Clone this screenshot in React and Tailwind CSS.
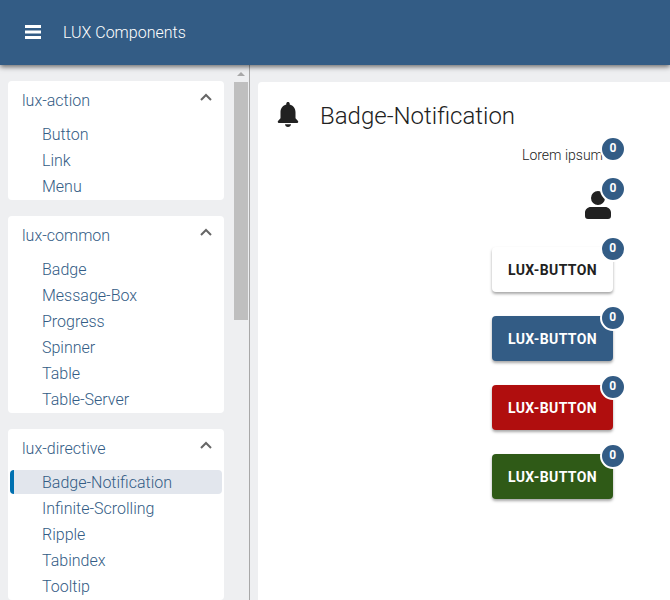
import React from "react";

const groups = [
  { title: "lux-action", items: ["Button", "Link", "Menu"] },
  { title: "lux-common", items: ["Badge", "Message-Box", "Progress", "Spinner", "Table", "Table-Server"] },
  { title: "lux-directive", items: ["Badge-Notification", "Infinite-Scrolling", "Ripple", "Tabindex", "Tooltip"] },
];

function Chevron() {
  return (
    <svg width="12" height="8" viewBox="0 0 12 8" className="text-[#666]">
      <path d="M1 7 L6 2 L11 7" fill="none" stroke="currentColor" strokeWidth="2" />
    </svg>
  );
}

function Badge({ className }) {
  return (
    <span className={`absolute w-[26px] h-[26px] box-border rounded-full bg-[#335c85] border-2 border-white flex items-center justify-center text-white text-[12px] font-bold pb-[2px] ${className}`}>
      0
    </span>
  );
}

function LuxButton({ className }) {
  return (
    <div className={`relative w-[121px] h-[45px] pt-[1px] rounded-[4px] flex items-center justify-center text-[14px] font-bold tracking-[0.4px] shadow-[0_2px_3px_rgba(0,0,0,0.35)] ${className}`}>
      LUX-BUTTON
      <Badge className="right-[-13px] top-[-11px]" />
    </div>
  );
}

export default function App() {
  return (
    <div className="w-[670px] h-[600px] overflow-hidden flex flex-col bg-[#eeeff1] font-['Roboto',sans-serif] font-light">
      <header className="relative z-10 h-[65px] shrink-0 bg-[#335c85] flex items-center pl-[25px] shadow-[0_2px_5px_rgba(0,0,0,0.55)]">
        <svg width="16" height="14" viewBox="0 0 16 14" className="mt-[-1px]">
          <path d="M0 0H16V3H0ZM0 5.500H16V8.500H0ZM0 11H16V14H0Z" fill="#fff" />
        </svg>
        <span className="ml-[22px] text-white text-[16px]">LUX Components</span>
      </header>
      <div className="flex flex-1 min-h-0">
        <aside className="w-[250px] shrink-0 border-r border-[#a8a8a8] flex overflow-hidden">
          <div className="w-[233px] shrink-0 pl-2 pt-4 flex flex-col gap-4">
            {groups.map((g) => (
              <section key={g.title} className="bg-white rounded-[4px] w-[216px] shrink-0">
                <div className="h-[38px] mb-[3px] pt-[2px] pl-[14px] pr-[12px] flex items-center justify-between text-[#335c85] text-[16px]">
                  <span>{g.title}</span>
                  <span className="mb-[8px]"><Chevron /></span>
                </div>
                <ul>
                  {g.items.map((it) => {
                    const active = it === "Badge-Notification";
                    return (
                      <li
                        key={it}
                        className={`flex items-center text-[16px] text-[#335c85] ${active ? "mx-[2px] pl-[28px] pt-[2px] h-[24px] mb-[2px] bg-[#e2e6ed] rounded-[4px] border-l-4 border-[#0070b0]" : "h-[26px] pl-[34px]"}`}
                      >
                        {it}
                      </li>
                    );
                  })}
                </ul>
              </section>
            ))}
          </div>
          <div className="w-[15px] shrink-0 flex flex-col items-center pt-[7px]">
            <div className="w-0 h-0 border-l-[4px] border-r-[4px] border-b-[4px] border-l-transparent border-r-transparent border-b-[#a8a8a8]" />
            <div className="w-[14px] h-[238px] mt-[6px] bg-[#bfbfbf]" />
          </div>
        </aside>
        <main className="flex-1 min-w-0 ml-[8px] mt-[17px] bg-white rounded-tl-[4px]">
          <div className="flex items-center h-[34px] mt-[17px] pl-[18px]">
            <svg width="24" height="26" viewBox="0 0 24 26" className="text-[#212121] mb-[4px]">
              <path
                fill="currentColor"
                d="M12 26c1.600 0 3-1.100 3-2.700H9c0 1.600 1.400 2.700 3 2.700zm10-6-2.500-2.700V11.200c0-3.700-2.400-6.800-5.800-7.700V2.600C13.700 1.700 13 1 12 1s-1.700.7-1.700 1.600v.9C6.900 4.400 4.500 7.500 4.500 11.200v6.100L2 20c-.5.500-.2 2 .8 2h18.400c1 0 1.300-1.500.8-2z"
              />
            </svg>
            <h1 className="ml-[20px] text-[24px] text-[#212121] font-light leading-none">Badge-Notification</h1>
          </div>
          <div className="flex flex-col items-end pr-[57px] mt-[12px]">
            <div className="relative text-[14px] text-[#212121] h-[20px] leading-[20px] mr-[10px]">
              Lorem ipsum
              <Badge className="right-[-23px] top-[-9px]" />
            </div>
            <div className="relative w-[28px] h-[33px] mt-[22px]">
              <svg width="28" height="33" viewBox="0 0 28 33" className="text-[#212121]">
                <path fill="currentColor" d="M13 4a7 7 0 1 1 0 14a7 7 0 0 1 0-14zM6 20h14c3.500 0 6 2.500 6 5.500v3.500c0 1.800-1 3-3 3H3c-2 0-3-1.200-3-3v-3.500C0 22.500 2.500 20 6 20z" />
              </svg>
              <Badge className="right-[-13px] top-[-11px]" />
            </div>
            <div className="flex flex-col gap-6 mt-[27px]">
              <LuxButton className="bg-white text-[#212121]" />
              <LuxButton className="bg-[#335c85] text-white" />
              <LuxButton className="bg-[#b00e0e] text-white" />
              <LuxButton className="bg-[#2f5a17] text-white" />
            </div>
          </div>
        </main>
      </div>
    </div>
  );
}
